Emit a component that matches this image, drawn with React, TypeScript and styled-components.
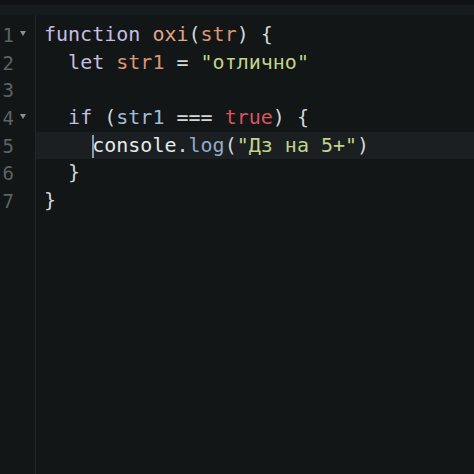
import React from "react";
import styled, { createGlobalStyle } from "styled-components";

const Global = createGlobalStyle`
  html, body { margin: 0; padding: 0; background: #121616; }
  body { width: 474px; height: 474px; overflow: hidden; }
`;

const Editor = styled.div`
  width: 474px;
  height: 474px;
  display: flex;
  flex-direction: column;
  background: #121616;
  font-family: "DejaVu Sans Mono", "Liberation Mono", monospace;
  font-size: 20px;
`;

const TopBar = styled.div`
  height: 15px;
  flex: none;
  background: #181b1e;
  border-top: 5px solid #0f1113;
  box-sizing: border-box;
`;

const Body = styled.div`
  flex: 1;
  display: grid;
  grid-template-columns: 36px 1fr;
`;

const Gutter = styled.div`
  border-right: 1px solid #23272a;
  padding-top: 6px;
  color: #5c6367;
`;

const Code = styled.div`
  padding-top: 6px;
`;

const GutterRow = styled.div`
  height: 27.7px;
  display: flex;
  align-items: center;
  padding-left: 2px;
  gap: 6px;
  font-size: 19px;
`;

const Num = styled.span`
  width: 12px;
  text-align: right;
`;

const Fold = styled.span`
  width: 0;
  height: 0;
  border-left: 3.5px solid transparent;
  border-right: 3.5px solid transparent;
  border-top: 5px solid #8a9096;
  margin-top: -2px;
`;

const Line = styled.div<{ $active?: boolean }>`
  height: 27.7px;
  line-height: 27.7px;
  padding-left: 8px;
  white-space: pre;
  color: #d6d8da;
  background: ${(p) => (p.$active ? "#1b1f21" : "transparent")};
`;

const Tok = styled.span<{ $c: string }>`
  color: ${(p) => p.$c};
`;

const Cursor = styled.span`
  display: inline-block;
  width: 2px;
  height: 23px;
  background: #8a9bb0;
  margin-right: -2px;
  vertical-align: middle;
`;

const C = {
  kw: "#c6bde0",
  fn: "#e3a58a",
  param: "#de9472",
  punc: "#d4d6d8",
  str: "#c3d48c",
  var2: "#9fbbd9",
  bool: "#d9545e",
  method: "#93aac6",
};

export default function App() {
  const lines: React.ReactNode[] = [
    <>
      <Tok $c={C.kw}>function</Tok>{" "}<Tok $c={C.fn}>oxi</Tok>
      <Tok $c={C.punc}>(</Tok>
      <Tok $c={C.param}>str</Tok>
      <Tok $c={C.punc}>{") {"}</Tok>
    </>,
    <>
      {"  "}
      <Tok $c={C.kw}>let</Tok>{" "}<Tok $c={C.param}>str1</Tok>{" "}
      <Tok $c={C.punc}>=</Tok>{" "}<Tok $c={C.str}>"отлично"</Tok>
    </>,
    <>{" "}</>,
    <>
      {"  "}
      <Tok $c={C.kw}>if</Tok>{" "}<Tok $c={C.punc}>(</Tok>
      <Tok $c={C.var2}>str1</Tok>{" "}<Tok $c={C.punc}>===</Tok>{" "}
      <Tok $c={C.bool}>true</Tok>
      <Tok $c={C.punc}>{") {"}</Tok>
    </>,
    <>
      {"    "}
      <Cursor />
      <Tok $c="#e6e8ea">console</Tok>
      <Tok $c={C.punc}>.</Tok>
      <Tok $c={C.method}>log</Tok>
      <Tok $c={C.punc}>(</Tok>
      <Tok $c={C.str}>"Дз на 5+"</Tok>
      <Tok $c={C.punc}>)</Tok>
    </>,
    <>
      {"  "}
      <Tok $c={C.punc}>{"}"}</Tok>
    </>,
    <>
      <Tok $c={C.punc}>{"}"}</Tok>
    </>,
  ];
  const folds = [true, false, false, true, false, false, false];
  return (
    <>
      <Global />
      <Editor>
        <TopBar />
        <Body>
          <Gutter>
            {lines.map((_, i) => (
              <GutterRow key={i}>
                <Num>{i + 1}</Num>
                {folds[i] && <Fold />}
              </GutterRow>
            ))}
          </Gutter>
          <Code>
            {lines.map((l, i) => (
              <Line key={i} $active={i === 4}>
                {l}
              </Line>
            ))}
          </Code>
        </Body>
      </Editor>
    </>
  );
}
